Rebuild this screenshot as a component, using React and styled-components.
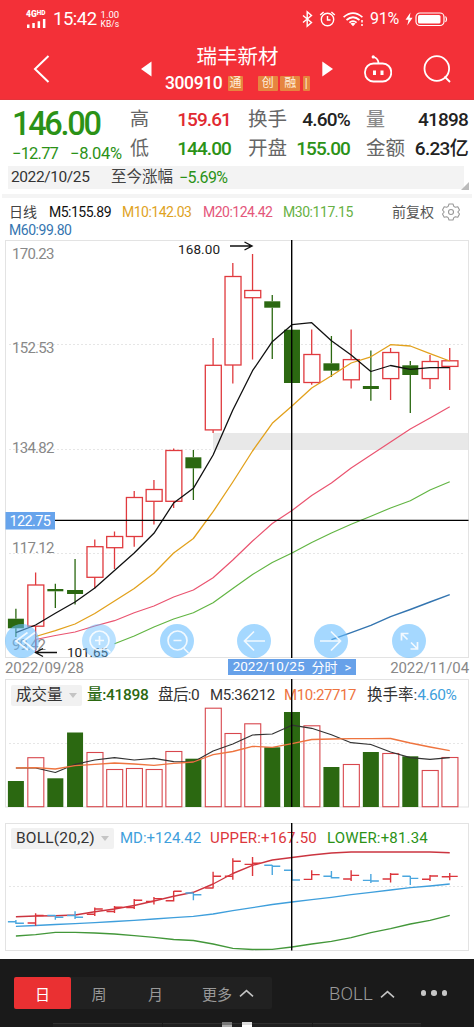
import React from 'react';
import styled, { createGlobalStyle } from 'styled-components';

const RED = '#e03a3e';
const GREEN = '#2b6811';
const DOWN = '#2b9217';
const BLUE = '#3f9fdc';

const GlobalStyle = createGlobalStyle`
  * {
    box-sizing: border-box;
  }

  body {
    margin: 0;
    background: #fff;
    font-family: Roboto, 'Noto Sans CJK SC', sans-serif;
  }

  svg {
    display: block;
  }
`;

const Screen = styled.div`
  width: 474px;
  height: 1027px;
  display: flex;
  flex-direction: column;
  overflow: hidden;
  background: #fff;
`;

const Text = styled.span`
  font-size: ${(p) => p.$size || 14}px;
  font-weight: ${(p) => p.$weight || 400};
  letter-spacing: ${(p) => p.$track || 0}px;
  color: ${(p) => p.$color || 'inherit'};
  line-height: 1;
  white-space: nowrap;
`;

/* ---------- header ---------- */

const Header = styled.header`
  height: 100px;
  background: #f33038;
  color: #fff;
  border-bottom: 1px solid #e5343b;
`;

const StatusBar = styled.div`
  height: 38px;
  padding: 0 26px;
  display: flex;
  align-items: center;
  justify-content: space-between;
`;

const StatusGroup = styled.div`
  display: flex;
  align-items: center;
  gap: ${(p) => p.$gap}px;
`;

const Stack = styled.div`
  display: flex;
  flex-direction: column;
`;

const Network = styled.div`
  width: 23px;
  display: flex;
  flex-direction: column;
`;

const NetworkLabel = styled.div`
  display: flex;
  align-items: flex-start;
  height: 9px;
`;

const TitleBar = styled.div`
  height: 61px;
  display: grid;
  grid-template-columns: 141px 24px 157px 42px 59px 1fr;
  align-items: center;
`;

const BackButton = styled.div`
  padding-left: 33px;
`;

const StockTitle = styled.div`
  display: flex;
  flex-direction: column;
  gap: 6px;
  padding-top: 3px;
`;

const StockName = styled.div`
  width: 145px;
  text-align: center;
  line-height: 21px;
  font-size: 20.5px;
`;

const CodeRow = styled.div`
  height: 20px;
  display: flex;
  align-items: center;
`;

const Tag = styled.span`
  flex: none;
  width: ${(p) => p.$width}px;
  height: 15px;
  margin-left: ${(p) => p.$left}px;
  border-radius: 1px;
  background: #e6853f;
  color: #fff0dc;
  font-size: 12px;
  line-height: 14px;
  text-align: center;
`;

/* ---------- quote ---------- */

const Quote = styled.section`
  height: 66px;
  display: grid;
  grid-template-columns: 130px 101px 17px 102px 16px 102px;
  padding-top: 5px;
`;

const PriceBlock = styled.div`
  padding: 6px 0 0 12px;
`;

const Price = styled.div`
  color: ${DOWN};
  font-size: 32.5px;
  font-weight: 500;
  line-height: 26px;
  letter-spacing: -2.3px;
`;

const Change = styled.div`
  display: flex;
  gap: 12px;
  margin-top: 9px;
`;

const Field = styled.div`
  height: 29px;
  display: flex;
  align-items: center;
  justify-content: space-between;
`;

const FieldColumn = styled.div`
  grid-column: ${(p) => p.$column};
`;

const DateBar = styled.div`
  position: relative;
  height: 23px;
  margin: 0 10px 0 8px;
  padding-left: 3px;
  display: grid;
  grid-template-columns: 100px 68px 1fr;
  align-items: center;
  background: #f3f3f3;
`;

const Corner = styled.i`
  position: absolute;
  right: -5px;
  bottom: -1px;
  border-left: 8px solid transparent;
  border-bottom: 8px solid #bbb;
`;

const Divider = styled.div`
  height: 4px;
  margin: 5px 2px 0;
  background: #f4f4f4;
`;

const Averages = styled.div`
  height: 42px;
  padding: 5px 0 0 9px;
  display: grid;
  grid-template-columns: 40px 73px 81px 80px 109px 50px 1fr;
  grid-auto-rows: 18px;
  align-items: center;
`;

/* ---------- charts ---------- */

const ChartPanel = styled.section`
  display: grid;
  height: ${(p) => p.$height}px;

  > * {
    grid-area: 1 / 1;
  }
`;

const MainChart = styled.section`
  position: relative;
  height: 418px;
`;

const RoundButton = styled.button`
  position: absolute;
  left: ${(p) => p.$center - 17}px;
  top: 384px;
  width: 34px;
  height: 34px;
  padding: 0;
  border: 0;
  border-radius: 50%;
  background: rgba(100, 188, 255, ${(p) => p.$alpha || 0.58});
`;

const DateAxis = styled.div`
  position: relative;
  height: 21px;
  padding: 0 5px;
  display: flex;
  align-items: center;
  justify-content: space-between;
`;

const DateChip = styled.div`
  position: absolute;
  left: 228px;
  top: 1px;
  width: 128px;
  height: 16px;
  background: #67a1e9;
  color: #fff;
  display: flex;
  align-items: center;
  justify-content: center;
  gap: 7px;
`;

const Legend = styled.div`
  height: 21px;
  margin: ${(p) => p.$top}px 0 0 11px;
  display: grid;
  grid-template-columns: ${(p) => p.$columns};
  align-items: center;
`;

const Picker = styled.div`
  width: ${(p) => p.$width}px;
  height: 21px;
  padding: 0 5px;
  display: flex;
  align-items: center;
  justify-content: space-between;
  background: #f1f1f1;
  border-radius: 2px;
  color: #333;
`;

const Triangle = styled.i`
  border: 4.5px solid transparent;
  border-top: 5px solid #c4c4c4;
  border-bottom: 0;
`;

/* ---------- bottom bar ---------- */

const BottomBar = styled.footer`
  height: 68px;
  margin-top: auto;
  background: #1a1a1a;
  display: grid;
  grid-template-rows: 62px 6px;
`;

const Controls = styled.div`
  padding: 18px 0 0 14px;
  display: flex;
  align-items: flex-start;
  color: #9b9b9b;
`;

const Tabs = styled.div`
  width: 258px;
  height: 32px;
  display: flex;
  background: #212121;
  border-radius: 2px;
`;

const Tab = styled.div`
  width: ${(p) => p.$width}px;
  height: 32px;
  display: flex;
  align-items: center;
  justify-content: center;
  gap: 7px;
  border-radius: 2px;
  font-size: 15px;
  color: ${(p) => (p.$active ? '#fff' : '#999')};
  background: ${(p) => (p.$active ? '#ea3032' : 'transparent')};
`;

const IndicatorMenu = styled.div`
  height: 34px;
  margin-left: 57px;
  display: flex;
  align-items: center;
  gap: 7px;
`;

const Dots = styled.div`
  height: 32px;
  margin-left: 26px;
  display: flex;
  align-items: center;
  gap: 5px;

  i {
    width: 5.5px;
    height: 5.5px;
    border-radius: 50%;
    background: #c6c6c6;
  }
`;

const TaskStrip = styled.div`
  display: grid;
  grid-template-columns: 109px 149px 108px;
  gap: 1px;
  padding: 1px 0 0 53px;
`;

const Task = styled.div`
  display: flex;
  gap: 10px;
  padding-left: 59px;
  margin-top: 1px;
  background: #202020;
  border-top: 1px solid #303030;

  i {
    width: 10px;
    height: 6px;
    margin-top: -2px;
    background: #aaa;
    border-top: 3px solid #777;
  }

  i + i {
    background: #fff;
    border-color: #ddd;
  }
`;

/* ---------- data, in screen pixels ---------- */

const xAt = (i) => 15.9 + i * 19.72;

// [up, body top, body bottom, high, low, volume top]
const candles = [
  [0, 618.7, 628.3, 608.7, 637, 781],
  [1, 585, 626.2, 572.5, 652, 757.7],
  [0, 589, 591.3, 583.7, 608, 778.3],
  [0, 590, 594, 559, 604.5, 732.5],
  [1, 546.7, 577.3, 539.5, 588.5, 752.5],
  [1, 536.5, 547.7, 531.5, 569, 769.5],
  [1, 497.5, 536.5, 491, 546.7, 768.5],
  [1, 489.5, 501.3, 480, 524.5, 769.5],
  [1, 450.5, 501.3, 448.5, 508, 751.5],
  [0, 457.3, 468.3, 450, 500, 758.7],
  [1, 365.3, 429.9, 338, 433, 708.2],
  [1, 276.5, 365, 263, 383.5, 733.5],
  [1, 290.5, 297.7, 254, 359.5, 723.8],
  [0, 301.3, 307.7, 295, 359, 747.3],
  [0, 329.7, 383, 329.7, 383, 712],
  [1, 354.5, 382.5, 329.5, 384.7, 725.8],
  [0, 363.3, 370.7, 336, 377, 767],
  [1, 359.6, 379.8, 329.5, 388.5, 764.5],
  [0, 386, 389, 350.5, 400.7, 752],
  [1, 352.5, 378.6, 348, 400, 753.5],
  [0, 365.3, 375, 361, 413, 756.3],
  [1, 361.5, 378.6, 355, 389, 770.5],
  [1, 360.8, 366.4, 348, 390, 757.5],
];

// [up, open, close, high, low]
const bollBars = [
  [0, 921.7, 923.3, 920, 924],
  [1, 923, 915.5, 913.3, 925.7],
  [0, 915.5, 917.3, 915, 919.7],
  [0, 915.5, 917.3, 911.3, 919],
  [1, 914.3, 909, 907.5, 916],
  [1, 911.5, 907.3, 906, 913],
  [1, 907.5, 900.3, 899, 909],
  [1, 901.5, 898.6, 897, 904.5],
  [1, 900.7, 891.3, 891, 901.5],
  [0, 893, 894.7, 893, 900.3],
  [1, 888, 876.3, 871.7, 888.5],
  [1, 876.3, 861.3, 858.3, 879.7],
  [1, 864.4, 863.3, 857, 876],
  [0, 865.3, 866.3, 865, 875],
  [0, 870.3, 880, 870, 880],
  [1, 879.4, 874.6, 870.3, 880],
  [0, 876.3, 877.7, 871, 878.5],
  [1, 879, 875.4, 870.3, 881],
  [0, 880.4, 881, 874, 883],
  [1, 879, 874.2, 873, 882.5],
  [0, 876.2, 878.4, 876, 885],
  [1, 879.2, 876, 875, 881],
  [1, 876.8, 876.4, 873, 880.3],
];

const ma5 = [632.7, 625, 613.3, 602, 588, 570.5, 553, 533.3, 503, 488.3, 455, 410, 370.7, 341.7, 324.7, 322.7, 340.7, 355, 371.5, 365.5, 369.3, 367.7, 367.7];
const ma10 = [636.5, 630.7, 624, 613.5, 601, 588.5, 573.3, 553, 538.5, 511.7, 482, 451, 423.3, 406, 388, 375.7, 363, 356.8, 344.7, 346, 353.7, 361];
const ma20 = [639.5, 635.5, 632, 626, 620.7, 612.7, 606, 597, 590, 577.7, 560, 541, 523.5, 510.5, 495.5, 483, 468, 455, 442, 429, 418, 406.7];
const ma30 = [643.8, 636, 627, 619, 612.7, 602.7, 588.5, 574.5, 562.5, 553, 542.5, 533, 524.3, 516.3, 508, 500.7, 490, 481.7];
const ma60 = [639.7, 632.7, 625.3, 616.7, 609.5, 602, 594.7];

const vol5 = [768, 768, 772.5, 764.3, 760, 757.7, 760, 758.3, 761.7, 762, 751, 744, 735, 734, 725.2, 728.3, 734.7, 742.7, 744.5, 752, 757.7, 759.3, 757.7];
const vol10 = [768, 767.7, 769, 765.7, 764.3, 763, 764, 765.3, 763.3, 762, 754.7, 751.5, 746.3, 747.3, 743.7, 739.5, 739, 738.7, 738.7, 738.5, 743, 747, 750.7];

const upper = [916.7, 916, 915.7, 915, 911.7, 909, 905.5, 901, 896.3, 892.3, 884, 873.5, 865.3, 860, 857.5, 855, 853, 852, 852, 852, 852, 852, 852.7];
const middle = [926.3, 925.5, 924.5, 923.7, 922.7, 921.5, 920.3, 919, 917.7, 916.3, 914, 910.7, 907.7, 904.5, 902, 899.7, 897.3, 894.7, 892.3, 890, 887.7, 886, 884];
const lower = [936, 934.7, 932.3, 932.3, 933, 934, 935.7, 937.3, 939.5, 940.5, 944, 948.3, 949.5, 949.3, 947, 944, 941.3, 937.7, 932.7, 928.7, 924, 920.3, 915.3];

/* ---------- drawing helpers ---------- */

const Line = ({ values, start = 0, color, width = 1.2 }) => (
  <polyline
    points={values.map((y, i) => `${xAt(i + start)},${y}`).join(' ')}
    fill="none"
    stroke={color}
    strokeWidth={width}
    strokeLinejoin="round"
  />
);

const Candle = ({ x, data: [up, top, bottom, high, low] }) => {
  const color = up ? RED : GREEN;
  return (
    <g stroke={color} strokeWidth="1.3">
      <path d={`M${x} ${high}V${top}M${x} ${bottom}V${low}`} />
      {up ? (
        <rect x={x - 7.8} y={top} width="16" height={bottom - top} fill="none" />
      ) : (
        <rect x={x - 8} y={top} width="16" height={bottom - top} fill={color} stroke="none" />
      )}
    </g>
  );
};

const Frame = ({ y, height, grid }) => (
  <g fill="none" stroke="#e3e3e3">
    <rect x="5.5" y={y} width="463" height={height} />
    {grid.map((g) => (
      <path key={g} d={`M9 ${g}H464`} stroke="#e6e6e6" strokeDasharray="2 2" />
    ))}
  </g>
);

const Caret = () => (
  <svg width="15" height="9" viewBox="0 0 15 9" fill="none" stroke="#c4c4c4" strokeWidth="1.6">
    <path d="M1 7.3 7.5 1.6 14 7.3" />
  </svg>
);

const axisLabels = [
  ['170.23', 259, 42.5],
  ['152.53', 353, 42.5],
  ['134.82', 453.3, 42.5],
  ['117.12', 553.3, 42.5],
  ['99.42', 649.5, 34],
];

const CandleChart = () => (
  <svg width="474" height="418" viewBox="0 240 474 418">
    <Frame y={240.5} height={417} grid={[344.5, 449.5, 553.5]} />
    <rect x="213" y="433" width="255" height="17" fill="#e8e8e8" />
    {axisLabels.map(([label, y, width]) => (
      <text key={label} x="12" y={y} textLength={width} fontSize="15" fill="#888">
        {label}
      </text>
    ))}
    {candles.map((c, i) => (
      <Candle key={i} x={xAt(i)} data={c} />
    ))}
    <Line values={ma60} start={16} color="#3475b0" width={1.4} />
    <Line values={ma30} start={5} color="#62b543" />
    <Line values={ma20} start={1} color="#ea5470" />
    <Line values={ma10} start={1} color="#e2a11c" width={1.3} />
    <Line values={ma5} color="#111" width={1.3} />
    <g fill="none" stroke="#111" strokeWidth="1.4">
      <path d="M230 246H252M244.5 242 252 246 244.5 250" />
      <path d="M57 652.5H36M43 648.5 35.5 652.5 43 656.5" />
    </g>
    <text x="178" y="254" textLength="42" fontSize="13.5" fill="#222">168.00</text>
    <text x="67" y="657" textLength="41" fontSize="13.5" fill="#222">101.65</text>
    <path d="M291.7 240V658M54 520.4H468.5" stroke="#000" strokeWidth="1.4" />
    <rect x="5.5" y="512" width="49.5" height="17.5" fill="#67a4ec" />
    <text x="9.5" y="526" textLength="41.5" fontSize="14.5" fill="#fff">122.75</text>
  </svg>
);

const VolumeChart = () => (
  <svg width="474" height="144" viewBox="0 679 474 144">
    <Frame y={679.5} height={127.5} grid={[743.5]} />
    {candles.map(([up, , , , , top], i) =>
      up ? (
        <rect key={i} x={xAt(i) - 7.8} y={top} width="16" height={806.7 - top} fill="none" stroke="#d8474d" strokeWidth="1.1" />
      ) : (
        <rect key={i} x={xAt(i) - 8} y={top} width="16" height={807 - top} fill={GREEN} />
      )
    )}
    <Line values={vol5} color="#333" />
    <Line values={vol10} color="#ee743f" width={1.3} />
    <path d="M291.7 679V807" stroke="#000" strokeWidth="1.4" />
  </svg>
);

const BollChart = () => (
  <svg width="474" height="130" viewBox="0 823 474 130">
    <Frame y={823.5} height={127} grid={[886.5]} />
    <Line values={lower} color="#43973a" width={1.3} />
    <Line values={middle} color={BLUE} width={1.3} />
    <Line values={upper} color="#cb3540" width={1.4} />
    {bollBars.map(([up, open, close, high, low], i) => (
      <path
        key={i}
        d={`M${xAt(i) - 8} ${open}H${xAt(i)}M${xAt(i)} ${close}h8M${xAt(i)} ${high}V${low}`}
        stroke={up ? '#dc363c' : '#4ba7df'}
        strokeWidth="1.4"
      />
    ))}
    <path d="M291.7 823V950.5" stroke="#000" strokeWidth="1.4" />
  </svg>
);

// [center x, icon path, background opacity]
const buttons = [
  [22, 'M22.5 8.5 11 17l12 9M30 8.5 18.5 17l11 9'],
  [99, 'M8 16.5a9.5 9.5 0 1 0 19 0a9.5 9.5 0 1 0-19 0M13 16.5h9M17.5 12v9M24.5 24.5l4 4', 0.45],
  [177, 'M8 16.5a9.5 9.5 0 1 0 19 0a9.5 9.5 0 1 0-19 0M13.5 16.5h8M24 24.5l4.5 4.5'],
  [254, 'M28 17H8M17 7.5 7.5 17 17 26.5'],
  [331, 'M6 17h20M17 7.5 26.5 17 17 26.5'],
  [408.5, 'M9.500 16.5V9.5H16.5M9.5 9.5 15.5 15.5M25.5 18V25H18.500M25.5 25 19 18.5'],
];

const StatusIcons = () => (
  <svg width="63" height="18" viewBox="0 0 63 18" fill="none" stroke="#fff" strokeWidth="1.4">
    <path d="m2 5.5 8.5 7L6.2 16.2V1.8l4.3 3.7L2 12.5" />
    <circle cx="26.5" cy="9.5" r="6.2" />
    <path d="M26.5 6v4h3M19.2 5l3.4-3M33.8 5l-3.400-3" />
    <path d="M42.600 7.2q9.400-8 18.800 0M45.500 10q6.500-5.500 13 0M48.400 12.600q3.600-3 7.200 0" strokeWidth="1.7" />
    <path d="m49.400 13.600 2.600 2.600 2.600-2.600q-2.600-1.800-5.200 0z" fill="#fff" stroke="none" />
    <path d="M61 10v2.500M61 14v2" strokeWidth="1.5" />
  </svg>
);

const Battery = () => (
  <svg width="43" height="16" viewBox="0 0 43 16" fill="none" stroke="#fff" strokeWidth="1.2">
    <path d="M5.500 1.500 .5 8.800h3L2.300 14.500l5.300-7.700h-3z" fill="#fff" stroke="none" />
    <rect x="11" y="2" width="28" height="12.5" rx="4" />
    <rect x="13" y="4" width="22.5" height="8.5" rx="1.500" fill="#fff" stroke="none" />
    <path d="M40.500 5.500q2 2.700 0 5.400" />
  </svg>
);

const App = () => (
  <>
    <GlobalStyle />
    <Screen>
      <Header>
        <StatusBar>
          <StatusGroup $gap={4}>
            <Network>
              <NetworkLabel>
                <Text $size={8.5} $weight={900}>4G</Text>
                <Text $size={6.5} $weight={900}>HD</Text>
              </NetworkLabel>
              <svg width="21" height="9" viewBox="0 0 21 9" fill="#fff">
                <path d="M1 5.5h2.5V9H1zM6.300 4h2.500v5H6.300zM11.600 2.300h2.500V9h-2.500zM16.900 0h2.500v9h-2.500z" />
              </svg>
            </Network>
            <Text $size={18.5} $track={-0.5}>15:42</Text>
            <Stack>
              <Text $size={9.5}>1.00</Text>
              <Text $size={8.5}>KB/s</Text>
            </Stack>
          </StatusGroup>
          <StatusGroup $gap={6}>
            <StatusIcons />
            <Text $size={16} $track={-0.2}>91%</Text>
            <Battery />
          </StatusGroup>
        </StatusBar>
        <TitleBar>
          <BackButton>
            <svg width="17" height="30" viewBox="0 0 17 30" fill="none" stroke="#fff" strokeWidth="2">
              <path d="M15.5 2 2 15l13.5 13" />
            </svg>
          </BackButton>
          <svg width="11" height="16" viewBox="0 0 11 16" fill="#fff"><path d="M10.5.5v15L0 8z" /></svg>
          <StockTitle>
            <StockName>瑞丰新材</StockName>
            <CodeRow>
              <Text $size={17.5} $weight={500} $track={-0.4}>300910</Text>
              <Tag $width={14.5} $left={6}>通</Tag>
              <Tag $width={20} $left={15}>创</Tag>
              <Tag $width={20} $left={2.5}>融</Tag>
              <Tag $width={7} $left={2.5}>|</Tag>
            </CodeRow>
          </StockTitle>
          <svg width="11" height="16" viewBox="0 0 11 16" fill="#fff"><path d="M.3.5v15L11 8z" /></svg>
          <svg width="28" height="28" viewBox="0 0 28 28" fill="none" stroke="#fff" strokeWidth="1.8">
            <rect x="1" y="8.5" width="26.2" height="18" rx="8.5" />
            <path d="M14.5 8.5q0-5-5-6.5" />
            <circle cx="9.2" cy="1.9" r="1.6" fill="#fff" stroke="none" />
            <path d="M10.5 15.500v4.500M18 15.500v4.500" strokeWidth="3" />
          </svg>
          <svg width="30" height="30" viewBox="0 0 30 30" fill="none" stroke="#fff" strokeWidth="1.8">
            <circle cx="13.8" cy="14.5" r="12.3" />
            <path d="m21.5 22.5 5.500 5.500" />
          </svg>
        </TitleBar>
      </Header>

      <Quote>
        <PriceBlock>
          <Price>146.00</Price>
          <Change>
            <Text $size={16.5} $track={-0.8} $color={DOWN}>−12.77</Text>
            <Text $size={16.5} $track={-0.35} $color={DOWN}>−8.04%</Text>
          </Change>
        </PriceBlock>
        <FieldColumn $column={2}>
          <Field>
            <Text $size={19} $color="#666">高</Text>
            <Text $size={19} $weight={500} $track={-0.9} $color="#e12a31">159.61</Text>
          </Field>
          <Field>
            <Text $size={19} $color="#666">低</Text>
            <Text $size={19} $weight={500} $track={-0.9} $color={DOWN}>144.00</Text>
          </Field>
        </FieldColumn>
        <FieldColumn $column={4}>
          <Field>
            <Text $size={19.5} $color="#666">换手</Text>
            <Text $size={19} $weight={500} $track={-0.8} $color="#222">4.60%</Text>
          </Field>
          <Field>
            <Text $size={19.5} $color="#666">开盘</Text>
            <Text $size={19} $weight={500} $track={-0.9} $color={DOWN}>155.00</Text>
          </Field>
        </FieldColumn>
        <FieldColumn $column={6}>
          <Field>
            <Text $size={19} $color="#8b8b8b" $weight={500}>量</Text>
            <Text $size={19} $weight={500} $track={-0.8} $color="#222">41898</Text>
          </Field>
          <Field>
            <Text $size={19.5} $color="#666">金额</Text>
            <Text $size={19} $weight={500} $track={-0.7} $color="#222">6.23亿</Text>
          </Field>
        </FieldColumn>
      </Quote>

      <DateBar>
        <Text $size={15.5} $track={-0.4} $color="#333">2022/10/25</Text>
        <Text $size={15.5} $color="#444">至今涨幅</Text>
        <Text $size={16} $track={-0.6} $color={DOWN}>−5.69%</Text>
        <Corner />
      </DateBar>
      <Divider />

      <Averages>
        <Text $size={14} $color="#444">日线</Text>
        <Text $size={14} $track={-0.5} $color="#111">M5:155.89</Text>
        <Text $size={14} $track={-0.5} $color="#e0a31f">M10:142.03</Text>
        <Text $size={14} $track={-0.5} $color="#e4577b">M20:124.42</Text>
        <Text $size={14} $track={-0.45} $color="#67b144">M30:117.15</Text>
        <Text $size={14} $color="#555">前复权</Text>
        <svg width="18" height="18" viewBox="0 0 18 18" fill="none" stroke="#999" strokeWidth="1.1">
          <path d="M7 1h4l.8 2.4 1.5.9 2.5-.5 1.7 3.2L15.8 9l1.7 2-1.7 3.2-2.5-.5-1.5.9L11 17H7l-.8-2.4-1.5-.9-2.500.5L.5 11l1.7-2L.5 7l1.7-3.200 2.500.5 1.500-.9z" strokeLinejoin="round" />
          <circle cx="9" cy="9" r="2.5" />
        </svg>
        <Text $size={14} $track={-0.45} $color="#3475b0">M60:99.80</Text>
      </Averages>

      <MainChart>
        <CandleChart />
        {buttons.map(([center, path, alpha]) => (
          <RoundButton key={center} $center={center} $alpha={alpha}>
            <svg width="34" height="34" viewBox="0 0 34 34" fill="none" stroke="#fff" strokeOpacity="0.85" strokeWidth="1.7">
              <path d={path} />
            </svg>
          </RoundButton>
        ))}
      </MainChart>
      <DateAxis>
        <Text $size={15} $track={-0.1} $color="#888">2022/09/28</Text>
        <Text $size={15} $track={-0.1} $color="#888">2022/11/04</Text>
        <DateChip>
          <Text $size={13.5}>2022/10/25</Text>
          <Text $size={13}>分时</Text>
          <Text $size={13}>&gt;</Text>
        </DateChip>
      </DateAxis>

      <ChartPanel $height={144}>
        <Legend $top={6} $columns="76px 71px 52px 74px 83px 1fr">
          <Picker $width={71}>
            <Text $size={15.5}>成交量</Text>
            <Triangle />
          </Picker>
          <Text $size={15.5} $track={-0.3} $color={GREEN} $weight={500}>量:41898</Text>
          <Text $size={15.5} $track={-0.6} $color="#333">盘后:0</Text>
          <Text $size={15} $track={-0.3} $color="#333">M5:36212</Text>
          <Text $size={15} $track={-0.4} $color="#ee743f">M10:27717</Text>
          <Text $size={15.5} $color="#333">
            换手率:
            <Text $size={15.5} $track={-0.5} $color={BLUE}>4.60%</Text>
          </Text>
        </Legend>
        <VolumeChart />
      </ChartPanel>

      <ChartPanel $height={130}>
        <Legend $top={5} $columns="109px 90px 117px 1fr">
          <Picker $width={103}>
            <Text $size={15.5} $track={0.2}>BOLL(20,2)</Text>
            <Triangle />
          </Picker>
          <Text $size={15} $color={BLUE}>MD:+124.42</Text>
          <Text $size={15} $track={0.17} $color="#dc363c">UPPER:+167.50</Text>
          <Text $size={15} $track={0.17} $color={DOWN}>LOWER:+81.34</Text>
        </Legend>
        <BollChart />
      </ChartPanel>

      <BottomBar>
        <Controls>
          <Tabs>
            <Tab $width={57} $active>日</Tab>
            <Tab $width={56}>周</Tab>
            <Tab $width={57}>月</Tab>
            <Tab $width={88}>更多<Caret /></Tab>
          </Tabs>
          <IndicatorMenu>
            <Text $size={18.5} $track={0.1} $weight={300}>BOLL</Text>
            <Caret />
          </IndicatorMenu>
          <Dots><i /><i /><i /></Dots>
        </Controls>
        <TaskStrip>
          <Task />
          <Task><i /><i /></Task>
          <Task />
        </TaskStrip>
      </BottomBar>
    </Screen>
  </>
);

export default App;
